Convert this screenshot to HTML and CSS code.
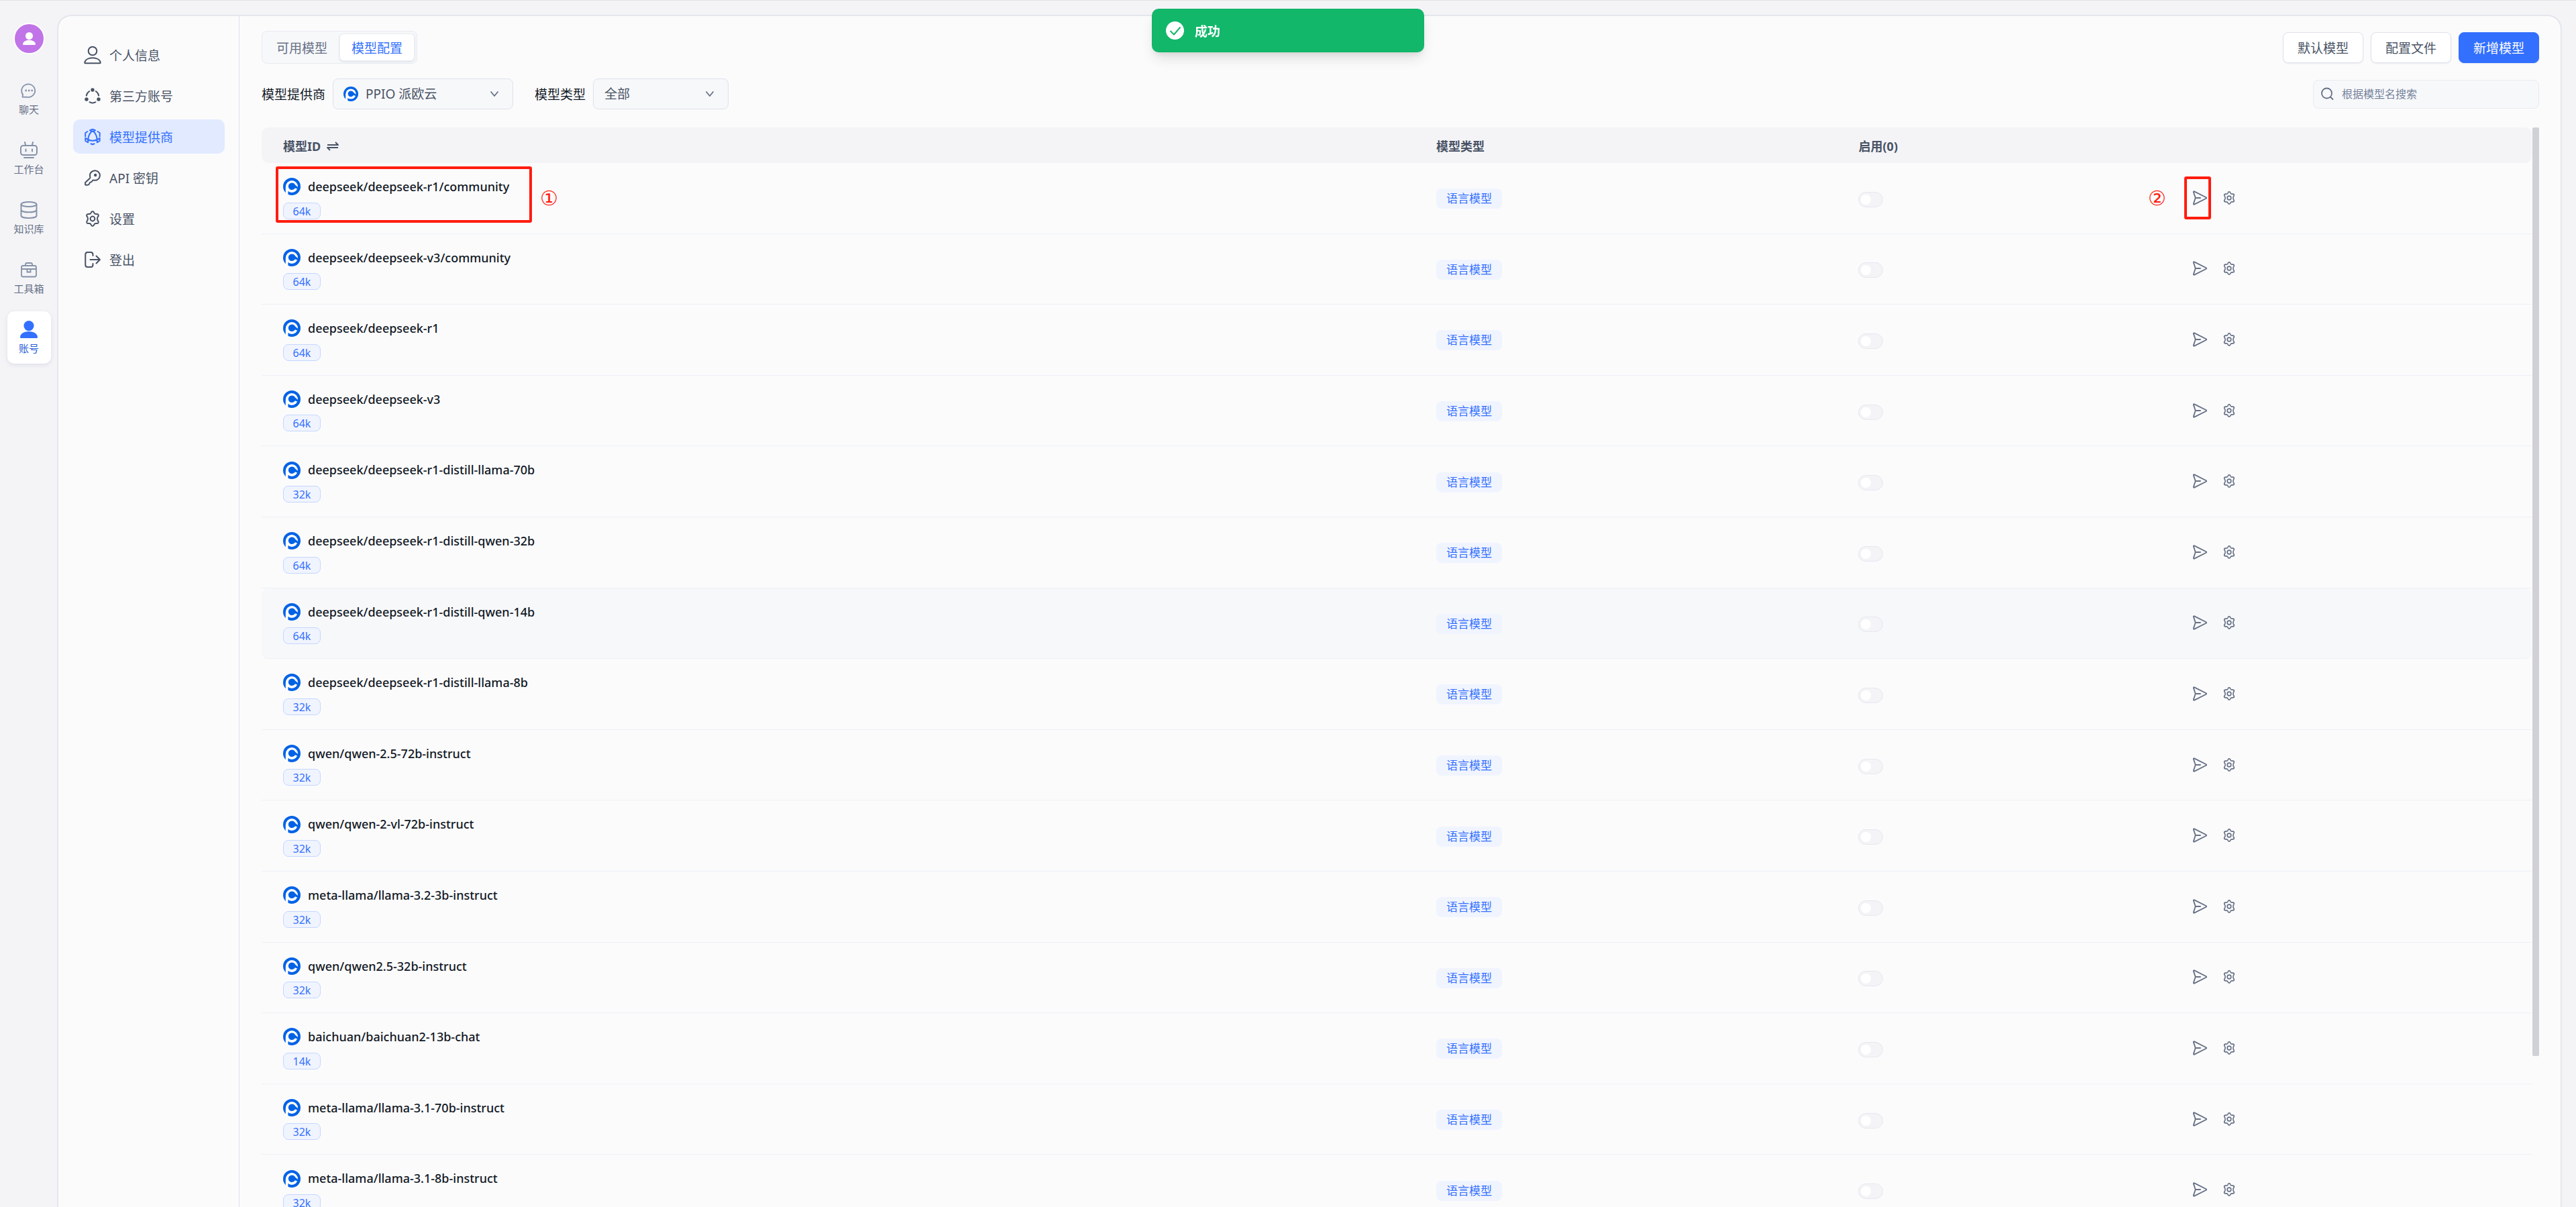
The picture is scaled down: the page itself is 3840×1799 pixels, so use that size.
FILE: index.html
```html
<!DOCTYPE html>
<html lang="zh-CN">
<head>
  <meta charset="UTF-8" />
  <meta name="viewport" content="width=device-width, initial-scale=1.0"/>
  <title>模型提供商</title>
  <link rel="stylesheet" href="styles.css">
</head>
<body>

<svg class="sprite" aria-hidden="true">
  <symbol id="i-logo" viewBox="0 0 26 26">
    <circle cx="13" cy="13" r="13" fill="#0062e6"/>
    <circle cx="13" cy="13" r="9" fill="#fff"/>
    <path d="M3.800 13h3.600v13H5.500L3.800 24z" fill="#fff"/>
    <path d="M13 7.600c2.400 0 4.200 1.300 5 3l4.400 3.600-.6 2.600-4-1.600c-1 1.800-2.800 2.800-4.800 2.800a5.200 5.200 0 0 1 0-10.400z" fill="#0062e6"/>
  </symbol>
  <symbol id="i-person" viewBox="0 0 24 24">
    <circle cx="12" cy="7" r="7"/>
    <path d="M0 22.500C0 18 6 14.800 12 14.800S24 18 24 22.500c0 .8-.6 1.500-1.500 1.500h-21C.6 24 0 23.300 0 22.500z"/>
  </symbol>
  <symbol id="i-send" viewBox="0 0 24 24">
    <path d="M2.800 1.500 22 11.200c.7.400.7 1.200 0 1.600L2.800 22.500c-.8.400-1.600-.3-1.300-1.100L4.600 12 1.500 2.600c-.3-.8.500-1.500 1.300-1.100zM4.600 12h8" fill="none" stroke="currentColor" stroke-width="2" stroke-linecap="round" stroke-linejoin="round"/>
  </symbol>
  <symbol id="i-gear" viewBox="0 0 24 24">
    <path d="M9.600 3.300C10.200 1.600 11 1 12 1s1.800.6 2.400 2.300c.5 1.300 1.600 1.900 3 1.700 1.800-.3 2.700.1 3.200 1s.4 1.900-.8 3.200c-.9 1.100-.9 4.500 0 5.600 1.200 1.300 1.300 2.300.8 3.200s-1.400 1.300-3.200 1c-1.400-.2-2.500.4-3 1.700C13.800 22.400 13 23 12 23s-1.800-.6-2.400-2.300c-.5-1.300-1.600-1.900-3-1.700-1.800.3-2.700-.1-3.200-1s-.4-1.900.8-3.200c.9-1.100.9-4.500 0-5.600C3 7.900 2.900 6.900 3.400 6s1.400-1.300 3.200-1c1.400.2 2.500-.4 3-1.700z" fill="none" stroke="currentColor" stroke-width="2"/>
    <circle cx="12" cy="12" r="3.400" fill="none" stroke="currentColor" stroke-width="2"/>
  </symbol>
  <symbol id="i-down" viewBox="0 0 14 14">
    <path d="M2 4l5 6 5-6" fill="none" stroke="currentColor" stroke-width="1.800" stroke-linecap="round" stroke-linejoin="round"/>
  </symbol>
</svg>

<div class="toast" role="status">
  <svg class="toast-icon" viewBox="0 0 27 27">
    <circle cx="13.500" cy="13.500" r="13.500" fill="#fff"/>
    <path d="M7 14.500l5 5 9-10.500" fill="none" stroke="#12b76a" stroke-width="2" stroke-linecap="round" stroke-linejoin="round"/>
  </svg>
  <span>成功</span>
</div>

<div class="app">
  <nav class="rail">
    <div class="avatar"><svg viewBox="0 0 24 24"><use href="#i-person"/></svg></div>
    <a class="rail-item" href="#">
      <svg viewBox="0 0 26 26"><g fill="none" stroke="currentColor" stroke-width="1.800"><path d="M3.500 22.500l.6-3.600A10 9.700 0 1 1 13.200 22.800z" stroke-linejoin="round"/></g><circle cx="8.700" cy="13" r="1.400"/><circle cx="13.200" cy="13" r="1.400"/><circle cx="17.700" cy="13" r="1.400"/></svg>
      <span>聊天</span>
    </a>
    <a class="rail-item" href="#">
      <svg viewBox="0 0 26 26"><g fill="none" stroke="currentColor" stroke-width="2" stroke-linecap="round"><rect x="1" y="6" width="24" height="14" rx="3.500"/><path d="M7 1l1 4M19 1l-1 4M6 24h14M8.500 11.500v3M18 11.500v3"/></g></svg>
      <span>工作台</span>
    </a>
    <a class="rail-item" href="#">
      <svg viewBox="0 0 26 26"><g fill="none" stroke="currentColor" stroke-width="2"><ellipse cx="13" cy="4.500" rx="11.500" ry="3.500"/><path d="M1.500 4.500v17C1.500 23.500 6.500 25 13 25s11.500-1.500 11.500-3.500v-17M1.500 13c2 4.400 21 4.400 23 0"/></g></svg>
      <span>知识库</span>
    </a>
    <a class="rail-item" href="#">
      <svg viewBox="0 0 26 26"><g fill="none" stroke="currentColor" stroke-width="1.800"><rect x="2" y="7" width="22" height="16.500" rx="2.500"/><path d="M8 7V5q0-2 2-2h6q2 0 2 2v2M2 12h22M10.500 12v4.500h5V12"/></g></svg>
      <span>工具箱</span>
    </a>
    <a class="rail-item active" href="#">
      <svg viewBox="0 0 24 24"><use href="#i-person"/></svg>
      <span>账号</span>
    </a>
  </nav>

  <div class="card">
    <nav class="side">
      <a class="side-item" href="#">
        <svg viewBox="0 0 24 24"><g fill="none" stroke="currentColor" stroke-width="2"><circle cx="12" cy="6" r="6.300"/><path d="M.2 23.300c.8-4.600 6-7 11.800-7s11 2.400 11.800 7q0 1-.8 1H1q-.8 0-.8-1z"/></g></svg>
        个人信息
      </a>
      <a class="side-item" href="#">
        <svg viewBox="0 0 24 24"><g fill="none" stroke="currentColor" stroke-width="2" stroke-linecap="round"><path d="M2.800 11.500A9.500 9.500 0 0 1 7.200 5M16.800 5a9.500 9.500 0 0 1 4.400 6.500M7.500 21.200a9.500 9.500 0 0 0 9 0"/></g><circle cx="12" cy="3" r="2.700"/><circle cx="3" cy="17" r="2.700"/><circle cx="21" cy="17" r="2.700"/></svg>
        第三方账号
      </a>
      <a class="side-item active" href="#">
        <svg viewBox="0 0 24 24"><g fill="none" stroke="currentColor" stroke-width="2" stroke-linecap="round" stroke-linejoin="round"><path d="M8 2.300L12 .8l4 1.500L12 4zM4.500 4L1.300 6v5.500M19.500 4l3.200 2v5.500M1.300 14v4l4 2.300V16zM22.700 14v4l-4 2.300V16zM9.500 22.300l2.500 1 2.500-1M10.500 4C7.500 7 5.600 11 5.300 16c4 2.200 9.400 2.200 13.400 0C18.400 11 16.500 7 13.500 4"/></g></svg>
        模型提供商
      </a>
      <a class="side-item" href="#">
        <svg viewBox="0 0 24 24"><path d="M15.500 1.200a7.300 7.300 0 1 1-1.600 14.400q-1.900-.4-2.600 1.400-.5 1.300-1.900 1.400-1.800.1-1.900 1.600-.1 1.400-1.500 2.200-.8.600-2 .6H1.900q-.8 0-.8-.8v-2q0-1 .8-1.700l5.500-5q1.200-1 1-2.500a7.400 7.400 0 0 1 7.100-9.600z" fill="none" stroke="currentColor" stroke-width="2" stroke-linejoin="round"/><circle cx="16.200" cy="8" r="2.200"/></svg>
        API 密钥
      </a>
      <a class="side-item" href="#">
        <svg viewBox="0 0 24 24"><use href="#i-gear"/></svg>
        设置
      </a>
      <a class="side-item" href="#">
        <svg viewBox="0 0 24 24"><path d="M12.500 6V4.500Q12.500 1 9.500 1H4.300Q1.300 1 1.300 4.500v15q0 3.500 3 3.500H9.500q3 0 3-3.500V18M8.500 12H23M17.500 6.500L23 12l-5.500 5.500" fill="none" stroke="currentColor" stroke-width="2" stroke-linecap="round" stroke-linejoin="round"/></svg>
        登出
      </a>
    </nav>

    <main class="main">
      <div class="bar">
        <div class="tabs">
          <button class="tab">可用模型</button>
          <button class="tab active">模型配置</button>
        </div>
        <div class="actions">
          <button class="btn">默认模型</button>
          <button class="btn">配置文件</button>
          <button class="btn primary">新增模型</button>
        </div>
      </div>

      <div class="filters">
        <label for="provider">模型提供商</label>
        <div class="select provider">
          <svg class="select-logo"><use href="#i-logo"/></svg>
          <select id="provider"><option>PPIO 派欧云</option></select>
          <svg class="select-arrow"><use href="#i-down"/></svg>
        </div>
        <label for="type">模型类型</label>
        <div class="select type">
          <select id="type"><option>全部</option></select>
          <svg class="select-arrow"><use href="#i-down"/></svg>
        </div>
        <div class="search">
          <svg viewBox="0 0 20 20"><path d="M9.500 1.500a7.500 7.500 0 1 1 0 15 7.500 7.500 0 0 1 0-15zM15 14.500l3.500 3.500" fill="none" stroke="currentColor" stroke-width="1.800" stroke-linecap="round"/></svg>
          <input type="text" placeholder="根据模型名搜索" aria-label="根据模型名搜索" />
        </div>
      </div>

      <div class="table-wrap">
        <table>
          <thead>
            <tr>
              <th class="col-name">模型ID <svg class="sort" viewBox="0 0 18 14"><path d="M1 5h16l-4-4M17 9H1l4 4" fill="none" stroke="currentColor" stroke-width="1.800" stroke-linejoin="round"/></svg></th>
              <th class="col-type">模型类型</th>
              <th class="col-on">启用(0)</th>
              <th></th>
            </tr>
          </thead>
          <tbody id="rows"></tbody>
        </table>
        <div class="thumb"></div>
      </div>
    </main>
  </div>
</div>

<script>
  const models = [
    ["deepseek/deepseek-r1/community", "64k"],
    ["deepseek/deepseek-v3/community", "64k"],
    ["deepseek/deepseek-r1", "64k"],
    ["deepseek/deepseek-v3", "64k"],
    ["deepseek/deepseek-r1-distill-llama-70b", "32k"],
    ["deepseek/deepseek-r1-distill-qwen-32b", "64k"],
    ["deepseek/deepseek-r1-distill-qwen-14b", "64k"],
    ["deepseek/deepseek-r1-distill-llama-8b", "32k"],
    ["qwen/qwen-2.5-72b-instruct", "32k"],
    ["qwen/qwen-2-vl-72b-instruct", "32k"],
    ["meta-llama/llama-3.2-3b-instruct", "32k"],
    ["qwen/qwen2.5-32b-instruct", "32k"],
    ["baichuan/baichuan2-13b-chat", "14k"],
    ["meta-llama/llama-3.1-70b-instruct", "32k"],
    ["meta-llama/llama-3.1-8b-instruct", "32k"]
  ];

  document.getElementById("rows").innerHTML = models.map(([name, size], i) => `
    <tr class="${i === 6 ? "hover" : ""}">
      <td>
        <div class="name"><svg><use href="#i-logo"/></svg>${name}</div>
        <span class="size">${size}</span>
        ${i === 0 ? '<span class="mark mark-name"></span><span class="step step-one">①</span>' : ""}
      </td>
      <td><span class="kind">语言模型</span></td>
      <td><input type="checkbox" class="switch" aria-label="启用"></td>
      <td>
        <div class="ops">
          <button aria-label="测试"><svg class="op-send"><use href="#i-send"/></svg></button>
          <button aria-label="设置"><svg class="op-gear"><use href="#i-gear"/></svg></button>
        </div>
        ${i === 0 ? '<span class="mark mark-send"></span><span class="step step-two">②</span>' : ""}
      </td>
    </tr>`).join("");
</script>

</body>
</html>
```

FILE: styles.css
```css
* { margin: 0; padding: 0; box-sizing: border-box; }

body, html { height: 100%; overflow: hidden; }

body {
  background: #f4f4f7;
  border-top: 1px solid #e2e2e0;
  color: #485264;
  font-family: "Noto Sans", "Noto Sans CJK SC", sans-serif;
  font-size: 19px;
}

button, input, select { font: inherit; color: inherit; }
button { cursor: pointer; }
a { color: inherit; text-decoration: none; }
svg { display: block; fill: currentColor; }

.sprite { position: absolute; width: 0; height: 0; }

.toast {
  position: fixed;
  top: 13px;
  left: 50%;
  transform: translateX(-50%);
  z-index: 10;
  display: flex;
  align-items: center;
  gap: 16px;
  width: 406px;
  height: 65px;
  padding: 0 21px;
  border-radius: 10px;
  background: #12b76a;
  color: #fff;
  font-weight: 700;
  box-shadow: 0 12px 20px -4px rgba(0,0,0,0.12), 0 4px 8px -2px rgba(0,0,0,0.08);
}
.toast-icon { width: 27px; height: 27px; }

.app { display: flex; height: 100%; }

/* left rail */
.rail {
  display: flex;
  flex-direction: column;
  align-items: center;
  gap: 11px;
  width: 86px;
  padding-top: 33px;
  color: #8592a8;
}
.avatar {
  display: flex;
  align-items: center;
  justify-content: center;
  width: 47px;
  height: 47px;
  margin-bottom: 16px;
  border: 2px solid #fff;
  border-radius: 50%;
  background: #c074e8;
  color: #fff;
}
.avatar svg { width: 19px; height: 19px; }
.rail-item {
  display: flex;
  flex-direction: column;
  align-items: center;
  gap: 3px;
  width: 65px;
  height: 78px;
  padding-top: 14px;
  border-radius: 10px;
  font-size: 15px;
  line-height: 24px;
}
.rail-item svg { width: 26px; height: 26px; }
.rail-item span { color: #667085; }
.rail-item.active {
  background: #fff;
  color: #3370ff;
  box-shadow: 0 2px 6px rgba(19,51,107,0.1);
}
.rail-item.active span { color: #2b5fd9; }

.card {
  flex: 1;
  display: flex;
  min-width: 0;
  margin: 22px 22px 0 0;
  border: 1px solid #dfe2ea;
  border-bottom: none;
  border-radius: 20px 20px 0 0;
  background: #fbfbfc;
  box-shadow: 0 0 2px rgba(19,51,107,0.15);
}

/* account menu */
.side {
  display: flex;
  flex-direction: column;
  gap: 10px;
  width: 270px;
  padding: 32px 21px 0 22px;
  border-right: 1px solid #dfe2ea;
}
.side-item {
  display: flex;
  align-items: center;
  gap: 13px;
  height: 51px;
  padding: 0 17px;
  border-radius: 10px;
}
.side-item svg { width: 24px; height: 24px; overflow: visible; }
.side-item.active { background: #e1eaff; color: #3370ff; }

.main {
  flex: 1;
  display: flex;
  flex-direction: column;
  min-width: 0;
  padding: 22px 32px 0 33px;
}

.bar {
  display: flex;
  justify-content: space-between;
  align-items: center;
}
.tabs {
  display: flex;
  padding: 3px;
  border: 1px solid #e8ebf0;
  border-radius: 8px;
  background: #f7f8fa;
}
.tab {
  width: 112px;
  height: 41px;
  border: 1px solid transparent;
  border-radius: 6px;
  background: none;
  color: #667085;
}
.tab.active {
  background: #fff;
  border-color: #eceef3;
  color: #3370ff;
  box-shadow: 0 1px 3px rgba(19,51,107,0.15);
}

.actions { display: flex; gap: 11px; }
.btn {
  width: 120px;
  height: 46px;
  border: 1px solid #dfe2ea;
  border-radius: 8px;
  background: #fff;
  box-shadow: 0 1px 2px rgba(19,51,107,0.08);
}
.btn.primary { background: #3370ff; border-color: #3370ff; color: #fff; }

.filters {
  display: flex;
  align-items: center;
  margin: 22px 0 27px;
  color: #111824;
}
.select {
  position: relative;
  margin: 0 32px 0 11px;
  color: #485264;
}
.select select {
  width: 100%;
  height: 46px;
  padding: 0 16px;
  border: 1px solid #dfe2ea;
  border-radius: 8px;
  background: #f7f8fa;
  appearance: none;
}
.provider { width: 269px; }
.provider select { padding-left: 48px; }
.type { width: 202px; }
.select-logo {
  position: absolute;
  top: 12px;
  left: 16px;
  width: 22px;
  height: 22px;
  pointer-events: none;
}
.select-arrow {
  position: absolute;
  top: 16px;
  right: 21px;
  width: 14px;
  height: 14px;
  color: #667085;
  pointer-events: none;
}
.search {
  display: flex;
  align-items: center;
  gap: 12px;
  width: 337px;
  height: 43px;
  margin-left: auto;
  padding: 0 10px;
  border: 1px solid #e8ebf0;
  border-radius: 8px;
  background: #f7f8fa;
  color: #667085;
}
.search svg { width: 20px; height: 20px; }
.search input {
  flex: 1;
  min-width: 0;
  border: none;
  outline: none;
  background: none;
  font-size: 16px;
}
.search input::placeholder { color: #74819a; }

/* model table */
.table-wrap {
  position: relative;
  flex: 1;
  min-height: 0;
  padding-right: 11px;
  overflow: hidden;
}
.thumb {
  position: absolute;
  top: 0;
  right: 0;
  width: 10px;
  height: 86%;
  border-radius: 2px;
  background: #d0d1d6;
}
table {
  width: 100%;
  table-layout: fixed;
  border-collapse: separate;
  border-spacing: 0;
}
th {
  height: 53px;
  padding: 0 32px;
  background: #f4f4f7;
  font-size: 18px;
  font-weight: 700;
  text-align: left;
}
th:first-child { border-radius: 10px 0 0 10px; }
th:last-child { border-radius: 0 10px 10px 0; }
.col-name { width: 50.8%; }
.col-type { width: 18.6%; }
.col-on { width: 14.7%; }
.sort { display: inline-block; width: 18px; height: 14px; margin-left: 4px; }

td {
  position: relative;
  padding: 20px 32px 21px;
  border-bottom: 1px solid #edf0f4;
  vertical-align: middle;
}
.hover td { background: #f7f8fa; }
.hover td:first-child { border-radius: 10px 0 0 10px; }
.hover td:last-child { border-radius: 0 10px 10px 0; }

.name {
  display: flex;
  align-items: center;
  gap: 11px;
  margin-bottom: 8px;
  color: #111824;
  font-size: 18px;
  font-weight: 500;
  line-height: 1.7;
}
.name svg { width: 26px; height: 26px; }
.size {
  display: block;
  width: 56px;
  height: 25px;
  border: 1px solid #c5d7ff;
  border-radius: 8px;
  background: #f0f4ff;
  color: #3370ff;
  font-size: 16px;
  line-height: 25px;
  text-align: center;
}
.kind {
  display: inline-block;
  margin-top: 3px;
  padding: 0 15px;
  border-radius: 8px;
  background: #f0f4ff;
  color: #3370ff;
  font-size: 17px;
  line-height: 30px;
}
.switch {
  display: block;
  width: 37px;
  height: 23px;
  margin-top: 5px;
  padding: 3px;
  border: 1px solid #e4e8ef;
  border-radius: 12px;
  background: #f4f4f7;
  appearance: none;
}
.switch::before {
  content: "";
  display: block;
  width: 15px;
  height: 15px;
  border-radius: 50%;
  background: #fff;
}
.ops { display: flex; align-items: center; gap: 22px; color: #667085; }
.ops button { border: none; background: none; }
.op-send { width: 23px; height: 22px; }
.op-gear { width: 20px; height: 20px; }

/* callouts over the first row */
.mark {
  position: absolute;
  border: 4px solid #ff1d0f;
  border-radius: 3px;
}
.mark-name { top: 5px; left: 21px; width: 382px; height: 84px; }
.mark-send { top: 20px; left: 20px; width: 40px; height: 64px; }
.step {
  position: absolute;
  top: 34px;
  color: #ff1d0f;
  font-family: "DejaVu Sans", sans-serif;
  font-size: 30px;
  line-height: 38px;
}
.step-one { left: 415px; }
.step-two { left: -34px; }
```
